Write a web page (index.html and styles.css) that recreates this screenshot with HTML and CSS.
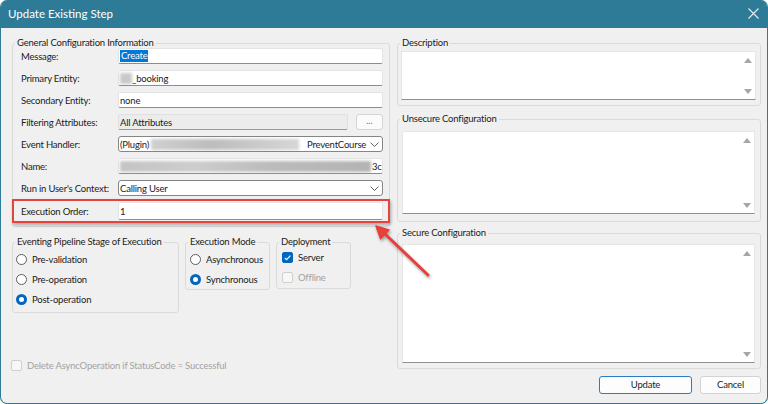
FILE: index.html
```html
<!DOCTYPE html>
<html lang="en">
<head>
    <meta charset="UTF-8">
    <meta name="viewport" content="width=device-width, initial-scale=1.0">
    <title>Update Existing Step</title>
    <link rel="stylesheet" href="styles.css">
</head>
<body>
    <div class="window">
        <div class="titlebar">
            <span>Update Existing Step</span>
            <svg class="close" width="11" height="11" viewBox="0 0 11 11">
                <path d="M0.5 0.5 L10.5 10.5 M10.5 0.5 L0.5 10.5" stroke="#e3edf2" stroke-width="1.1" fill="none"/>
            </svg>
        </div>

        <div class="content">
            <div class="left">
                <fieldset class="group general">
                    <legend>General Configuration Information</legend>
                    <div class="rows">
                        <div class="row">
                            <label>Message:</label>
                            <div class="field"><span class="sel">Create</span></div>
                        </div>
                        <div class="row">
                            <label>Primary Entity:</label>
                            <div class="field"><span class="blur b-entity"></span>_booking</div>
                        </div>
                        <div class="row">
                            <label>Secondary Entity:</label>
                            <div class="field">none</div>
                        </div>
                        <div class="row">
                            <label>Filtering Attributes:</label>
                            <div class="field readonly">All Attributes</div>
                            <button class="dots">...</button>
                        </div>
                        <div class="row">
                            <label>Event Handler:</label>
                            <div class="field select">
                                <span>(Plugin)</span><span class="blur b-handler"></span><span>PreventCourse</span>
                                <svg class="chev" width="9" height="5" viewBox="0 0 9 5"><path d="M0.5 0.5 L4.5 4.5 L8.5 0.5" stroke="#606060" fill="none"/></svg>
                            </div>
                        </div>
                        <div class="row">
                            <label>Name:</label>
                            <div class="field"><span class="blur b-name"></span><span class="tail">3c</span></div>
                        </div>
                        <div class="row">
                            <label>Run in User's Context:</label>
                            <div class="field select">
                                <span>Calling User</span>
                                <svg class="chev" width="9" height="5" viewBox="0 0 9 5"><path d="M0.5 0.5 L4.5 4.5 L8.5 0.5" stroke="#606060" fill="none"/></svg>
                            </div>
                        </div>
                        <div class="row highlight">
                            <label>Execution Order:</label>
                            <div class="field tall">1</div>
                        </div>
                    </div>
                </fieldset>

                <div class="options">
                    <fieldset class="group stage">
                        <legend>Eventing Pipeline Stage of Execution</legend>
                        <div class="list">
                            <div class="opt"><span class="radio"></span>Pre-validation</div>
                            <div class="opt"><span class="radio"></span>Pre-operation</div>
                            <div class="opt"><span class="radio on"></span>Post-operation</div>
                        </div>
                    </fieldset>
                    <fieldset class="group mode">
                        <legend>Execution Mode</legend>
                        <div class="list">
                            <div class="opt"><span class="radio"></span>Asynchronous</div>
                            <div class="opt"><span class="radio on"></span>Synchronous</div>
                        </div>
                    </fieldset>
                    <fieldset class="group deploy">
                        <legend>Deployment</legend>
                        <div class="list">
                            <div class="opt"><span class="check on">
                                <svg width="9" height="9" viewBox="0 0 9 9"><path d="M1.8 4.8 L3.6 6.6 L7.4 2.6" stroke="#fff" stroke-width="1.2" fill="none"/></svg>
                            </span>Server</div>
                            <div class="opt disabled"><span class="check"></span>Offline</div>
                        </div>
                    </fieldset>
                </div>

                <div class="opt disabled delete"><span class="check"></span>Delete AsyncOperation if StatusCode = Successful</div>
            </div>

            <div class="right">
                <fieldset class="group desc">
                    <legend>Description</legend>
                    <div class="textarea">
                        <div class="text"></div>
                        <div class="scroll">
                            <svg width="8" height="5" viewBox="0 0 8 5"><path d="M0 5 L4 0 L8 5 Z" fill="#a6a6a6"/></svg>
                            <svg width="8" height="5" viewBox="0 0 8 5"><path d="M0 0 L4 5 L8 0 Z" fill="#a6a6a6"/></svg>
                        </div>
                    </div>
                </fieldset>
                <fieldset class="group unsecure">
                    <legend>Unsecure Configuration</legend>
                    <div class="textarea">
                        <div class="text"></div>
                        <div class="scroll">
                            <svg width="8" height="5" viewBox="0 0 8 5"><path d="M0 5 L4 0 L8 5 Z" fill="#a6a6a6"/></svg>
                            <svg width="8" height="5" viewBox="0 0 8 5"><path d="M0 0 L4 5 L8 0 Z" fill="#a6a6a6"/></svg>
                        </div>
                    </div>
                </fieldset>
                <fieldset class="group secure">
                    <legend>Secure Configuration</legend>
                    <div class="textarea">
                        <div class="text"></div>
                        <div class="scroll">
                            <svg width="8" height="5" viewBox="0 0 8 5"><path d="M0 5 L4 0 L8 5 Z" fill="#a6a6a6"/></svg>
                            <svg width="8" height="5" viewBox="0 0 8 5"><path d="M0 0 L4 5 L8 0 Z" fill="#a6a6a6"/></svg>
                        </div>
                    </div>
                </fieldset>

                <div class="buttons">
                    <button class="btn default">Update</button>
                    <button class="btn cancel">Cancel</button>
                </div>
            </div>
        </div>

        <!-- annotation arrow pointing at the execution order box -->
        <svg class="arrow" width="768" height="404" viewBox="0 0 768 404">
            <g fill="#e8403a" stroke="#e8403a" stroke-linecap="round" stroke-linejoin="round">
                <path d="M385 234 L428 275" stroke-width="3" fill="none"/>
                <path d="M376 226 L389 230 L380.5 238.6 Z" stroke-width="1.5"/>
            </g>
        </svg>
    </div>
</body>
</html>
```

FILE: styles.css
```css
* {
    box-sizing: border-box;
}
html, body {
    margin: 0;
    padding: 0;
    background: #fff;
}
body {
    font-family: "Segoe UI", Lato, "Noto Sans", sans-serif;
    font-size: 9.5px;
    letter-spacing: -0.2px;
    color: #1b1b1b;
}
.window {
    position: relative;
    width: 768px;
    height: 404px;
    display: flex;
    flex-direction: column;
    background: #f0f0f0;
    border: 1px solid #2e7b97;
    border-top: none;
    border-radius: 7px;
    overflow: hidden;
}
.titlebar {
    height: 28px;
    flex: 0 0 28px;
    background: #2e7b97;
    color: #fff;
    font-size: 11.5px;
    letter-spacing: 0;
    display: flex;
    align-items: center;
    justify-content: space-between;
    padding: 0 8px 1px 7px;
}
.content {
    flex: 1;
    display: flex;
    gap: 7px;
    padding: 10px 6px 8px 11px;
}
.left {
    width: 378px;
    display: flex;
    flex-direction: column;
}
.right {
    width: 364px;
    display: flex;
    flex-direction: column;
}

/* group boxes */
.group {
    margin: 0;
    padding: 0;
    min-width: 0;
    border: 1px solid #dadada;
    border-radius: 3px;
}
.group legend {
    margin-left: 2px;
    padding: 0 2px;
    line-height: 10px;
    height: 10px;
    white-space: nowrap;
}

/* general configuration rows */
.rows {
    display: flex;
    flex-direction: column;
    gap: 6px;
    padding: 0 6px 3px 8px;
}
.row {
    display: flex;
    align-items: center;
    height: 16px;
}
.row label {
    flex: 0 0 97px;
    white-space: nowrap;
}
.field {
    flex: 1;
    height: 16px;
    display: flex;
    align-items: center;
    padding: 0 1px;
    background: #fff;
    border: 1px solid #e3e3e3;
    border-bottom-color: #8d8d8d;
    border-radius: 2px;
    white-space: nowrap;
    overflow: hidden;
}
.field.tall {
    height: 18px;
}
.field.readonly {
    background: #ececec;
    border-color: #e0e0e0;
    border-bottom-color: #9a9a9a;
}
.field.select {
    border: 1px solid #858585;
    border-radius: 3px;
}
.chev {
    margin-left: auto;
    margin-right: 2px;
}
.sel {
    background: #0078d7;
    color: #fff;
    padding: 0 1px;
    line-height: 12px;
}
.dots {
    flex: 0 0 27px;
    height: 16px;
    margin-left: 8px;
    padding: 0 0 3px;
    font: inherit;
    color: #777;
    background: #fbfbfb;
    border: 1px solid #d4d4d4;
    border-radius: 3px;
}
.blur {
    display: inline-block;
    flex-shrink: 0;
    height: 11px;
    filter: blur(1.6px);
}
.b-entity {
    width: 12px;
    background: #c9c9c9;
}
.b-handler {
    width: 148px;
    margin: 0 8px 0 2px;
    background: linear-gradient(90deg, #d0d0d0, #bdbdbd 40%, #c9c9c9 70%, #d6d6d6);
}
.b-name {
    width: 251px;
    margin-right: 1px;
    background: linear-gradient(90deg, #c4c4c4, #cdcdcd 30%, #bbbbbb 60%, #b3b3b3);
}
.row.highlight {
    height: 24px;
    margin: -3px -7px 0 -9px;
    padding: 1px 5px 1px 7px;
    border: 2px solid #e5443e;
    box-shadow: 1px 2px 3px rgba(0, 0, 0, 0.3);
}

/* option groups */
.options {
    display: flex;
    align-items: flex-start;
    gap: 6px;
    margin-top: 10px;
}
.stage {
    width: 167px;
}
.mode {
    width: 85px;
}
.deploy {
    width: 75px;
}
.list {
    display: flex;
    flex-direction: column;
    padding: 2px 0 3px 3px;
}
.mode .list {
    padding: 2px 0 0 4px;
}
.deploy .list {
    padding: 1px 0 1px 5px;
}
.opt {
    height: 20px;
    display: flex;
    align-items: center;
    gap: 5px;
    white-space: nowrap;
}
.deploy .opt {
    height: 19.5px;
}
.opt.disabled {
    color: #a3a3a3;
}
.radio {
    width: 11px;
    height: 11px;
    border-radius: 50%;
    border: 1px solid #5d5d5d;
    background: #fff;
}
.radio.on {
    border: 3px solid #0067c0;
}
.check {
    width: 11px;
    height: 11px;
    border-radius: 2px;
    border: 1px solid #8a8a8a;
    background: #fff;
    display: flex;
    align-items: center;
    justify-content: center;
}
.check.on {
    border-color: #0067c0;
    background: #0067c0;
}
.opt.disabled .check {
    border-color: #cfcfcf;
    background: #f7f7f7;
}
.delete {
    margin-top: auto;
    margin-left: -1px;
    margin-bottom: 24px;
    height: 12px;
}

/* right side text areas */
.textarea {
    display: flex;
    background: #fff;
    border: 1px solid #e6e6e6;
    border-bottom: 1px solid #8f8f8f;
}
.text {
    flex: 1;
}
.scroll {
    width: 15px;
    display: flex;
    flex-direction: column;
    align-items: center;
    justify-content: space-between;
    padding: 6px 0 5px;
}
.desc .textarea {
    height: 49px;
    margin: 3px 4px 5px 3px;
}
.unsecure {
    margin-top: 8px;
}
.unsecure .textarea {
    height: 83px;
    margin: 7px 5px 7px 4px;
}
.secure {
    margin-top: 6px;
}
.secure .textarea {
    height: 119px;
    margin: 6px 5px 5px 4px;
}
.buttons {
    display: flex;
    justify-content: flex-end;
    gap: 8px;
    margin-top: 7px;
}
.btn {
    height: 18px;
    font: inherit;
    letter-spacing: inherit;
    color: #1b1b1b;
    background: #fdfdfd;
    border: 1px solid #d2d2d2;
    border-radius: 3px;
    padding: 0 0 1px;
}
.btn.default {
    width: 93px;
    border-color: #2a7cc7;
}
.btn.cancel {
    width: 61px;
}
.arrow {
    position: absolute;
    left: -1px;
    top: 0;
    pointer-events: none;
    filter: drop-shadow(1px 2px 1.5px rgba(0, 0, 0, 0.35));
}
```
